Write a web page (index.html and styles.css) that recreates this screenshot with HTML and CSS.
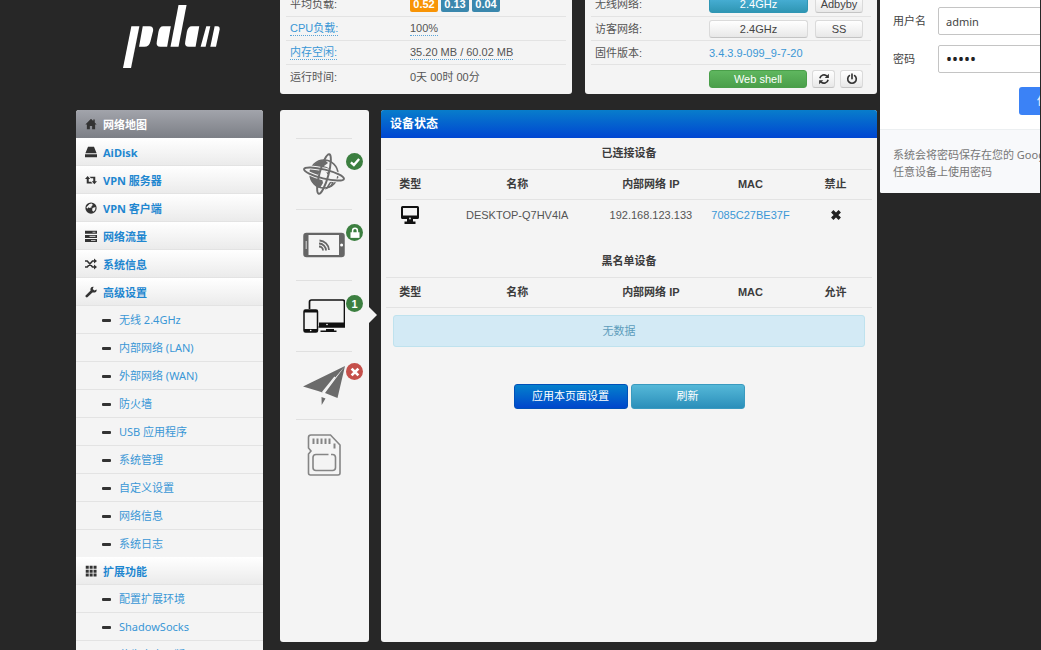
FILE: index.html
```html
<!DOCTYPE html>
<html lang="zh-CN">
<head>
<meta charset="utf-8">
<title>网络地图</title>
<link rel="stylesheet" href="styles.css">
</head>
<body>
<div class="page">
  <header class="top">
    <div class="brand">
      <svg class="logo" viewBox="160 15 290 188" fill="#fff" role="img" aria-label="pdcn">
        <path d="M185 78h24L184 203h-24z"/>
        <path d="M219 78h20q13 0 11 14l-8 32q-4 16-18 16h-16z"/>
        <path d="M280 78h23l-11 62h-20q-14 0-11-15l5-30q3-17 14-17z"/>
        <path d="M326 15h24l-24 125h-24z"/>
        <path d="M366 78h22l-11 62h-20q-14 0-11-15l5-30q3-17 15-17z"/>
        <path d="M409 78h12l-14 62h-15z"/>
        <path d="M434 78h8q8 0 7 10l-11 52h-17z"/>
      </svg>
    </div>
    <section class="panel info">
      <div class="row"><span>平均负载:</span><span class="loads"><b class="load load-warn">0.52</b><b class="load">0.13</b><b class="load">0.04</b></span></div>
      <div class="row"><a class="hint" href="#cpu">CPU负载:</a><span class="hint">100%</span></div>
      <div class="row"><a class="hint" href="#mem">内存空闲:</a><span class="hint">35.20 MB / 60.02 MB</span></div>
      <div class="row"><span>运行时间:</span><span>0天 00时 00分</span></div>
    </section>
    <section class="panel info info-net">
      <div class="row"><span>无线网络:</span><span class="actions"><button class="btn btn-info grow">2.4GHz</button><button class="btn side">Adbyby</button></span></div>
      <div class="row"><span>访客网络:</span><span class="actions"><button class="btn grow">2.4GHz</button><button class="btn side">SS</button></span></div>
      <div class="row"><span>固件版本:</span><a href="#firmware">3.4.3.9-099_9-7-20</a></div>
      <div class="row row-tall"><span></span><span class="actions tight"><button class="btn btn-green grow">Web shell</button>
        <button class="btn small" aria-label="重启"><svg class="ic" viewBox="0 0 16 16" fill="none" stroke="#333" stroke-width="2.2"><path d="M2.5 7A5.6 5.6 0 0 1 12 4.2M13.500 9A5.600 5.600 0 0 1 4 11.800"/><path d="M14.500 1v5.500H9zM1.500 15V9.500H7z" fill="#333" stroke="none"/></svg></button>
        <button class="btn small" aria-label="注销"><svg class="ic" viewBox="0 0 16 16" fill="none" stroke="#333" stroke-width="2.2" stroke-linecap="round"><path d="M8 1.500v6M4.500 3.500a5.700 5.700 0 1 0 7 0"/></svg></button></span></div>
    </section>
  </header>

  <div class="content">
    <nav class="menu">
      <a class="item active" href="#map"><svg class="ic" viewBox="0 0 16 16"><path d="M8 1 0.500 8.500h2V15H6.500v-4.500h3V15h4V8.500h2L13 6V2h-2v2z"/></svg>网络地图</a>
      <a class="item" href="#aidisk"><svg class="ic" viewBox="0 0 16 16"><path d="M4 1h8l3.500 8.500H.5zM0 11h16v4H0z"/></svg>AiDisk</a>
      <a class="item" href="#vpns"><svg class="ic" viewBox="0 0 16 16"><path d="M3.500 2.500 0 6.500h2.300v6h7.700l-2-2.200H5V6.500h2zM12.500 13.500l3.500-4h-2.300v-6H6l2 2.200h3v3.800H9z"/></svg>VPN 服务器</a>
      <a class="item" href="#vpnc"><svg class="ic" viewBox="0 0 16 16"><circle cx="8" cy="8" r="7.500"/><path d="M6 2.500 9 2l1.500 2-2 1.500.5 1.500-3 1-1.500-1L3 9 1.800 7zM10 8l4-1.500-.5 4L11 13l-1.500-2z" fill="#f4f4f4"/></svg>VPN 客户端</a>
      <a class="item" href="#traffic"><svg class="ic" viewBox="0 0 16 16"><path d="M0 1h16v4H0zM0 6.500h16v4H0zM0 12h16v4H0z"/><path d="M10 3h4M6 8.500h8M8 14h6" stroke="#bbb" stroke-width="1.500"/></svg>网络流量</a>
      <a class="item" href="#sysinfo"><svg class="ic" viewBox="0 0 16 16"><path d="M0 4h3l7 8h3M0 12h3l7-8h3" fill="none" stroke="#333" stroke-width="2.200"/><path d="M12 .8 16 4l-4 3.200zM12 8.800l4 3.200-4 3.200z"/></svg>系统信息</a>
      <a class="item" href="#advanced"><svg class="ic" viewBox="0 0 16 16"><path d="M15.500 4.500 12.500 6 10.300 4 11.500 1C8 .500 6.500 3.500 7.500 6L.8 12.500c-1 1.200 1 3.400 2.400 2.500L10 8.500c3 1 6-.5 5.500-4z"/></svg>高级设置</a>
      <a class="sub" href="#wifi">无线 2.4GHz</a>
      <a class="sub" href="#lan">内部网络 (LAN)</a>
      <a class="sub" href="#wan">外部网络 (WAN)</a>
      <a class="sub" href="#fw">防火墙</a>
      <a class="sub" href="#usb">USB 应用程序</a>
      <a class="sub" href="#admin">系统管理</a>
      <a class="sub" href="#custom">自定义设置</a>
      <a class="sub" href="#netinfo">网络信息</a>
      <a class="sub last" href="#log">系统日志</a>
      <a class="item" href="#ext"><svg class="ic" viewBox="0 0 16 16"><path d="M1 1h4v4H1zM6.200 1h4v4h-4zM11.400 1h4v4h-4zM1 6.200h4v4H1zM6.200 6.200h4v4h-4zM11.400 6.200h4v4h-4zM1 11.400h4v4H1zM6.200 11.400h4v4h-4zM11.400 11.400h4v4h-4z"/></svg>扩展功能</a>
      <a class="sub" href="#extenv">配置扩展环境</a>
      <a class="sub" href="#ss">ShadowSocks</a>
      <a class="sub" href="#ddns">花生壳内网版</a>
    </nav>

    <div class="panel tabs">
      <a class="tab" href="#internet" aria-label="互联网">
        <svg class="pic" viewBox="0 0 42 42" fill="none" stroke="#6b6b6b">
          <circle cx="21" cy="21" r="14" stroke-width="1.500"/>
          <path d="M8 17c2-6 8-10 14-10l3 3-4 3 1 3-5 2-2 4 4 3 1 5-3 5C10 33 5 25 8 17z" fill="#6b6b6b" stroke="none"/>
          <path d="M20 14a8 8 0 0 1 8 6M20 17a5 5 0 0 1 5 4M27 30l4-3-3 6-4 2z" stroke-width="1.500"/>
          <ellipse cx="21" cy="21" rx="20.500" ry="4.500" transform="rotate(14 21 21)" stroke="#f4f4f4" stroke-width="4"/>
          <ellipse cx="21" cy="21" rx="20.500" ry="4.500" transform="rotate(14 21 21)" stroke-width="2"/>
          <ellipse cx="21" cy="21" rx="20.500" ry="4.500" transform="rotate(-75 21 21)" stroke-width="2"/>
        </svg>
        <span class="badge"><svg class="ic" viewBox="0 0 16 16"><path d="M2.500 8.500 6.500 12l7-8" fill="none" stroke="#fff" stroke-width="3.200"/></svg></span>
      </a>
      <a class="tab" href="#wireless" aria-label="无线">
        <svg class="pic" viewBox="0 0 42 42" fill="none" stroke="#666">
          <rect x="1" y="9.500" width="40" height="23" rx="2.500" fill="#666" stroke-width="1.500"/>
          <rect x="5.500" y="11" width="30.500" height="20" fill="#f4f4f4" stroke="none"/>
          <path d="M3.200 17v8" stroke="#ddd"/><circle cx="38.600" cy="21" r="1.500" fill="#fff" stroke="none"/>
          <path d="M16.500 16.500a10 10 0 0 1 9.500 9.500M16 19.500a7 7 0 0 1 7 7M16 22.500a4 4 0 0 1 4 4" stroke-width="1.800"/>
        </svg>
        <span class="badge"><svg class="ic" viewBox="0 0 16 16"><path d="M2 7h12v7.500H2z" fill="#fff"/><path d="M4.800 8V5a3.200 3.200 0 0 1 6.400 0v3" fill="none" stroke="#fff" stroke-width="2"/></svg></span>
      </a>
      <a class="tab current" href="#clients" aria-label="设备">
        <svg class="pic" viewBox="0 0 42 42">
          <path d="M6.500 14V7q0-2 2-2h31q2 0 2 2v25h-26" fill="none" stroke="#111" stroke-width="1.700"/>
          <path d="M16 27.500h25.500V32H16zM23 34h8v1.500h2.500V37H17.500v-1.500H23z" fill="#111"/><circle cx="24" cy="29.500" r=".8" fill="#fff"/>
          <rect x="1" y="15" width="13.500" height="22" rx="1.500" fill="#f4f4f4" stroke="#111" stroke-width="1.500"/>
          <path d="M1 15h13v2.500H1zM1 34h13v3H1z" fill="#111"/><circle cx="7.700" cy="35.500" r=".8" fill="#fff"/>
        </svg>
        <span class="badge">1</span>
      </a>
      <a class="tab short" href="#usbmodem" aria-label="调制解调器">
        <svg class="pic" viewBox="0 0 42 42" fill="#6b6b6b"><path d="M42 1 0 21.500 15 26zM42 1 34.500 33 22 28zM42 1 15 26l4.500 1.500zM18.500 32l4 1.500-3.800 6.500z"/><path d="M32 12 19.500 27.500" stroke="#f4f4f4" stroke-width="1.500"/></svg>
        <span class="badge badge-red"><svg class="ic" viewBox="0 0 16 16"><path d="m3.500 3.500 9 9m0-9-9 9" stroke="#fff" stroke-width="3.600"/></svg></span>
      </a>
      <a class="tab" href="#sd" aria-label="存储">
        <svg class="pic" viewBox="0 0 42 42" fill="none" stroke="#858585" stroke-width="1.600"><path d="M8 1h19.500L37 11v28q0 2-2 2H7.500q-2 0-2-2V20l2.500-3-2.500-3V3.500Q5.500 1 8 1z"/><path d="M10.500 4.500V10M14.500 4.500V10M18.500 4.500V10M22.500 4.500V10M26.500 4.500V10M31.500 9.500v5" stroke-width="2"/><path d="M25.500 20.500H13q-3 0-3 3v10q0 3 3 3h16.500q3 0 3-3v-10q0-3-3-3H28"/></svg>
      </a>
    </div>

    <main class="panel main">
      <h1 class="title">设备状态</h1>
      <div class="body">
        <table class="grid">
          <colgroup><col class="c-type"><col class="c-name"><col class="c-ip"><col class="c-mac"><col></colgroup>
          <thead>
            <tr><th colspan="5">已连接设备</th></tr>
            <tr><th>类型</th><th>名称</th><th>内部网络 IP</th><th>MAC</th><th>禁止</th></tr>
          </thead>
          <tbody>
            <tr><td><svg class="host" viewBox="0 0 18 18"><path d="M1.500 0h15Q18 0 18 1.500v10q0 1.500-1.500 1.500H12v2.500h2.500V18h-11v-2.500H6V13H1.500Q0 13 0 11.500v-10Q0 0 1.500 0z" fill="#111"/><path d="M2 2h14v7.500H2z" fill="#f4f4f4"/><circle cx="9" cy="12.500" r=".9" fill="#eee"/></svg></td><td>DESKTOP-Q7HV4IA</td><td>192.168.123.133</td><td><a href="#mac">7085C27BE37F</a></td><td><button class="plain" aria-label="禁止"><svg class="ic" viewBox="0 0 16 16"><path d="m3 3 10 10M13 3 3 13" stroke="#222" stroke-width="4.500"/></svg></button></td></tr>
          </tbody>
        </table>
        <table class="grid">
          <colgroup><col class="c-type"><col class="c-name"><col class="c-ip"><col class="c-mac"><col></colgroup>
          <thead>
            <tr><th colspan="5">黑名单设备</th></tr>
            <tr><th>类型</th><th>名称</th><th>内部网络 IP</th><th>MAC</th><th>允许</th></tr>
          </thead>
          <tbody><tr><td colspan="5" class="empty"><div class="alert">无数据</div></td></tr></tbody>
        </table>
        <div class="submit"><button class="btn-lg primary">应用本页面设置</button><button class="btn-lg info-lg">刷新</button></div>
      </div>
    </main>
  </div>
</div>

<aside class="dialog">
  <form class="fields">
    <div class="field"><label for="user">用户名</label><input id="user" type="text" value="admin"></div>
    <div class="field"><label for="pass">密码</label><input id="pass" type="password" value="admin"></div>
    <button class="save" type="button">保存</button>
  </form>
  <p class="note">系统会将密码保存在您的 Goog<br>任意设备上使用密码</p>
</aside>
</body>
</html>
```
FILE: styles.css
```css
* { box-sizing: border-box; }
body {
  margin: 0;
  height: 100vh;
  overflow: hidden;
  position: relative;
  background: #272727;
  color: #555;
  font: 11px/16px "Liberation Sans", "Noto Sans CJK SC", sans-serif;
}
a { color: #3a97d6; text-decoration: none; }
button, input { font: inherit; }
.ic { width: 12px; height: 12px; display: block; flex: none; }

.page {
  display: flex;
  flex-direction: column;
  height: 100%;
  padding: 0 164px 0 76px;
}
.panel { background: #f4f4f4; border-radius: 3px; }

/* Header */
.top { display: flex; margin-top: -20px; }
.brand { flex: none; width: 204px; padding: 25px 0 0 47px; }
.logo { width: 97px; height: 63px; display: block; }
.info { flex: 1; padding: 12px 6px 2px; }
.info-net { margin-left: 13px; }
.row {
  display: grid;
  grid-template-columns: 120px 1fr;
  align-items: center;
  justify-items: start;
  height: 24px;
  padding-left: 4px;
  border-top: 1px solid #e3e3e3;
}
.info-net .row { grid-template-columns: 114px 1fr; }
.info .row:first-child { border-top: 0; }
.info .row-tall { height: 28px; }
.hint { border-bottom: 1px dotted #5aa5d8; line-height: 14px; }
.loads { display: flex; gap: 3px; }
.load {
  padding: 0 3px;
  min-width: 28px;
  text-align: center;
  line-height: 15px;
  border-radius: 2px;
  background: #3a87ad;
  color: #fff;
}
.load-warn { background: #f89406; }
.actions { display: flex; gap: 7px; width: 100%; padding-right: 8px; }
.tight { gap: 5px; }
.grow { flex: 1; }
.side { width: 48px; }
.small { width: 23px; }
.btn {
  display: flex;
  align-items: center;
  justify-content: center;
  height: 18px;
  padding: 0;
  border: 1px solid #dadada;
  border-bottom-color: #c4c4c4;
  border-radius: 3px;
  background: linear-gradient(#fff, #e8e8e8);
  color: #444;
}
.btn-info { background: linear-gradient(#4db4dc, #2f96b4); border-color: #2f96b4; color: #fff; }
.btn-green { background: linear-gradient(#5fb75f, #4a9f4a); border-color: #4a9f4a; color: #fff; }

/* Content columns */
.content { flex: 1; min-height: 0; display: flex; margin-top: 16px; }
.menu {
  flex: none;
  align-self: flex-start;
  width: 187px;
  margin-right: 17px;
  border-radius: 3px 3px 0 0;
  overflow: hidden;
  background: #f4f4f4;
  font-family: "Noto Sans", "Noto Sans CJK SC", sans-serif;
}
.item, .sub {
  display: flex;
  align-items: center;
  height: 28px;
  border-bottom: 1px solid #e3e3e3;
}
.item {
  gap: 6px;
  padding: 2px 0 0 9px;
  font-weight: bold;
  color: #1f87d0;
  background: linear-gradient(#fff, #ebebeb);
}
.item .ic { fill: #333; margin-bottom: 2px; }
.active { background: linear-gradient(#a2a4ab, #7d8087); border-color: #7d8087; color: #fff; }
.sub { gap: 8px; padding: 1px 0 0 26px; }
.sub.last { height: 27px; border-bottom: 0; }
.sub::before { content: ""; width: 9px; height: 3px; border-radius: 1px; background: #333; }

.tabs { flex: none; width: 89px; margin: 0 12px 8px 0; padding: 28px 17px 0 16px; }
.tab {
  position: relative;
  display: flex;
  align-items: center;
  justify-content: center;
  height: 71px;
  border-top: 1px solid #e0e0e0;
}
.tab.short { height: 68px; }
.pic { width: 42px; height: 42px; }
.badge {
  position: absolute;
  top: 14px;
  right: -11px;
  display: flex;
  align-items: center;
  justify-content: center;
  width: 17px;
  height: 17px;
  border-radius: 50%;
  background: #3c7f40;
  color: #fff;
  font-weight: bold;
}
.short .badge { top: 11px; }
.badge-red { background: #c5504b; }
.current::after {
  content: "";
  position: absolute;
  top: 25px;
  right: -25px;
  border: 9px solid transparent;
  border-left-color: #f4f4f4;
  border-right-width: 0;
}

/* Device status */
.main { flex: 1; margin-bottom: 8px; overflow: hidden; }
.title {
  margin: 0;
  padding: 0 9px;
  font-size: 12px;
  line-height: 28px;
  color: #fff;
  background: linear-gradient(#087dcb, #0046d2);
}
.body { padding: 0 5px; }
.grid { width: 100%; table-layout: fixed; border-collapse: collapse; text-align: center; }
.grid + .grid { margin-top: 16px; }
.c-type { width: 10%; }
.c-name { width: 34%; }
.c-ip { width: 21%; }
.c-mac { width: 20%; }
.grid th, .grid td { height: 31px; padding: 0; }
.grid tr + tr th { height: 30px; }
.grid th { color: #3c3c3c; font-weight: bold; }
.grid tr + tr th, .grid tbody td { border-top: 1px solid #e3e3e3; }
.host { width: 18px; height: 18px; display: block; margin: auto; }
.plain { display: block; margin: auto; padding: 0; border: 0; background: none; }
.grid .empty { padding: 7px 7px 0; }
.alert {
  padding: 7px 28px 7px 8px;
  border: 1px solid #bfe2ee;
  border-radius: 3px;
  background: #d3eaf5;
  color: #5c9cbb;
}
.submit { display: flex; justify-content: center; gap: 3px; margin-top: 37px; }
.btn-lg {
  width: 114px;
  height: 25px;
  padding: 0;
  border: 1px solid #0050b8;
  border-radius: 3px;
  color: #fff;
}
.primary { background: linear-gradient(#0480cc, #0046cc); }
.info-lg { background: linear-gradient(#55b8d8, #2b8fba); border-color: #3a9abf; }

/* Password prompt */
.dialog {
  position: absolute;
  top: 0;
  right: 1px;
  width: 160px;
  overflow: hidden;
  border-radius: 0 0 0 2px;
  background: #fff;
  font-family: "Noto Sans", "Noto Sans CJK SC", sans-serif;
}
.fields { display: flex; flex-direction: column; gap: 10px; padding: 7px 0 14px 13px; }
.field { display: flex; align-items: center; color: #444; }
.field label { flex: none; width: 45px; }
.field input {
  flex: none;
  width: 180px;
  height: 28px;
  padding: 0 7px;
  border: 1px solid #c4c4c4;
  border-radius: 2px;
  color: #444;
}
.field input[type="password"] { font-size: 16px; color: #222; }
.save {
  height: 28px;
  width: 64px;
  margin: 4px 0 0 126px;
  padding: 0 0 0 18px;
  text-align: left;
  border: 0;
  border-radius: 3px;
  background: #3b82f6;
  color: #fff;
}
.note {
  margin: 0;
  padding: 16px 0 13px 13px;
  border-top: 1px solid #eceff1;
  background: #f8f9fb;
  color: #777;
  line-height: 17px;
  white-space: nowrap;
}
```
